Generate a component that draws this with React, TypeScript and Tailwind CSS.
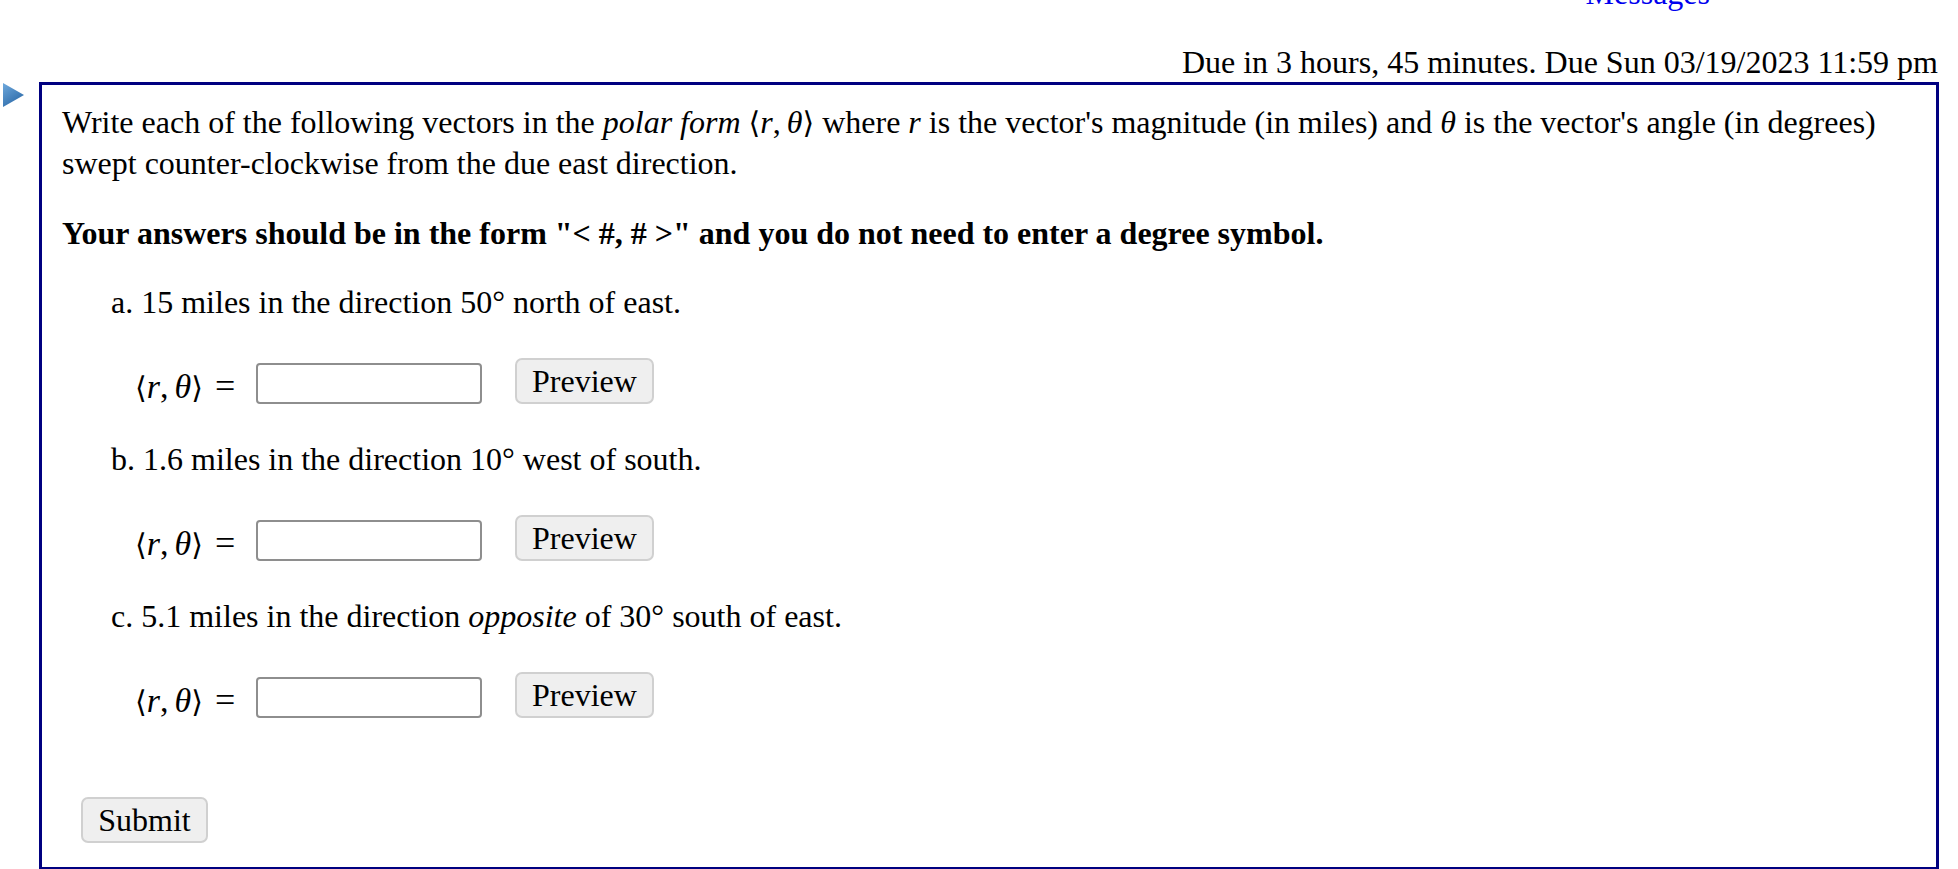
import React from 'react';

interface ItemProps {
  label: React.ReactNode;
  first?: boolean;
}

function PolarMath({ big }: { big?: boolean }) {
  return (
    <span className={big ? 'whitespace-nowrap text-[34px]' : 'whitespace-nowrap'}>
      <span className="font-['DejaVu_Serif',serif] text-[30px]">⟨</span>
      <i className="font-['Liberation_Serif',serif]">r</i>
      <span className="mr-[6px]">,</span>
      <i className="font-['Liberation_Serif',serif]">θ</i>
      <span className="font-['DejaVu_Serif',serif] text-[30px]">⟩</span>
    </span>
  );
}

function AnswerItem({ label, first }: ItemProps) {
  return (
    <div className={first ? 'mt-[29px] pl-[49px]' : 'mt-[35px] pl-[49px]'}>
      <div className="h-[40px] whitespace-nowrap">{label}</div>
      <div className="mt-[36px] flex items-start h-[46px] pl-[24px]">
        <span className="mt-[8px] w-[110px] shrink-0 whitespace-nowrap">
          <PolarMath big />
          <span className="ml-[12px] text-[36px]">=</span>
        </span>
        <input
          type="text"
          className="ml-[11px] mt-[5px] w-[226px] h-[41px] border-2 border-[#8e8e8e] rounded-[4px] bg-white outline-none px-2"
        />
        <button className="ml-[33px] w-[139px] h-[46px] border-2 border-[#d0d0d0] rounded-[7px] bg-[#efefef] leading-none text-black">
          Preview
        </button>
      </div>
    </div>
  );
}

export default function App() {
  return (
    <div className="flex flex-col min-h-screen bg-white text-black font-['Liberation_Serif','DejaVu_Serif',serif] text-[32px] leading-[40px] overflow-hidden">
      <div className="mt-[-27px] h-[40px] text-right pr-[248px]">
        <a className="text-[#0000ee] cursor-pointer">Messages</a>
      </div>
      <div className="mt-[29px] h-[40px] text-right pr-[20px] whitespace-nowrap">
        Due in 3 hours, 45 minutes. Due Sun 03/19/2023 11:59 pm
      </div>

      <div className="flex items-start">
        <div className="w-[39px] shrink-0 pl-[3px] pt-[1px]">
          <svg width="21" height="24" viewBox="0 0 21 24">
            <defs>
              <linearGradient id="tri" x1="0" y1="0" x2="0.6" y2="1">
                <stop offset="0" stopColor="#6fa9dd" />
                <stop offset="1" stopColor="#2c6aa8" />
              </linearGradient>
            </defs>
            <polygon points="0,0 21,12 0,24" fill="url(#tri)" />
          </svg>
        </div>

        <div className="flex-1 mr-[19px] border-[3px] border-[#000080] pt-[17px] pl-[20px] pr-[20px] pb-[24px]">
          <p>
            Write each of the following vectors in the <i>polar form</i> <PolarMath /> where <i>r</i> is the
            vector's magnitude (in miles) and <i>θ</i> is the vector's angle (in degrees)
            <br />
            swept counter-clockwise from the due east direction.
          </p>
          <p className="mt-[30px] font-bold whitespace-nowrap">
            Your answers should be in the form "&lt; #, # &gt;" and you do not need to enter a degree symbol.
          </p>

          <AnswerItem first label={<>a. 15 miles in the direction 50° north of east.</>} />
          <AnswerItem label={<>b. 1.6 miles in the direction 10° west of south.</>} />
          <AnswerItem
            label={
              <>
                c. 5.1 miles in the direction <i>opposite</i> of 30° south of east.
              </>
            }
          />

          <button className="mt-[79px] ml-[19px] w-[127px] h-[46px] border-2 border-[#d0d0d0] rounded-[7px] bg-[#efefef] leading-none text-black block">
            Submit
          </button>
        </div>
      </div>
    </div>
  );
}
